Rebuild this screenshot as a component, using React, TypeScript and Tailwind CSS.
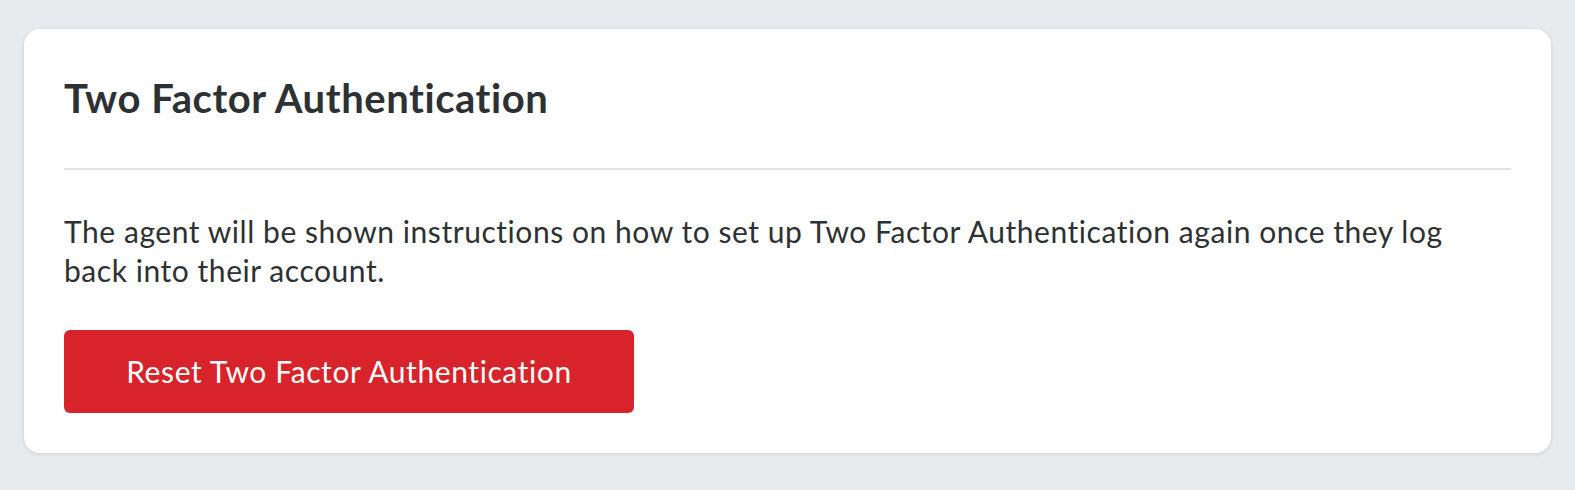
import React from "react";

const App = () => {
  return (
    <div
      className="min-h-screen bg-[#e8ebee] px-6 pt-[29px] pb-10"
      style={{ fontFamily: "Lato, 'Noto Sans', sans-serif" }}
    >
      <section className="bg-white rounded-2xl shadow-[0_1px_4px_rgba(0,0,0,0.12)] px-10 pt-[45px] pb-[40px]">
        <h2 className="text-[40px] leading-[48px] font-bold text-[#2d3133] tracking-[0.55px]">
          Two Factor Authentication
        </h2>
        <div className="mt-[46px] mb-[42px] h-[2px] bg-[#e0e2e4]" />
        <p className="text-[30px] leading-[39px] text-[#2d3133] tracking-[0.55px]">
          The agent will be shown instructions on how to set up Two Factor Authentication again once they log back into their account.
        </p>
        <button
          type="button"
          className="mt-[40px] w-[570px] h-[83px] rounded-md bg-[#d9232a] text-white text-[30px] tracking-[0.6px] flex items-center justify-center"
        >
          Reset Two Factor Authentication
        </button>
      </section>
    </div>
  );
};

export default App;
